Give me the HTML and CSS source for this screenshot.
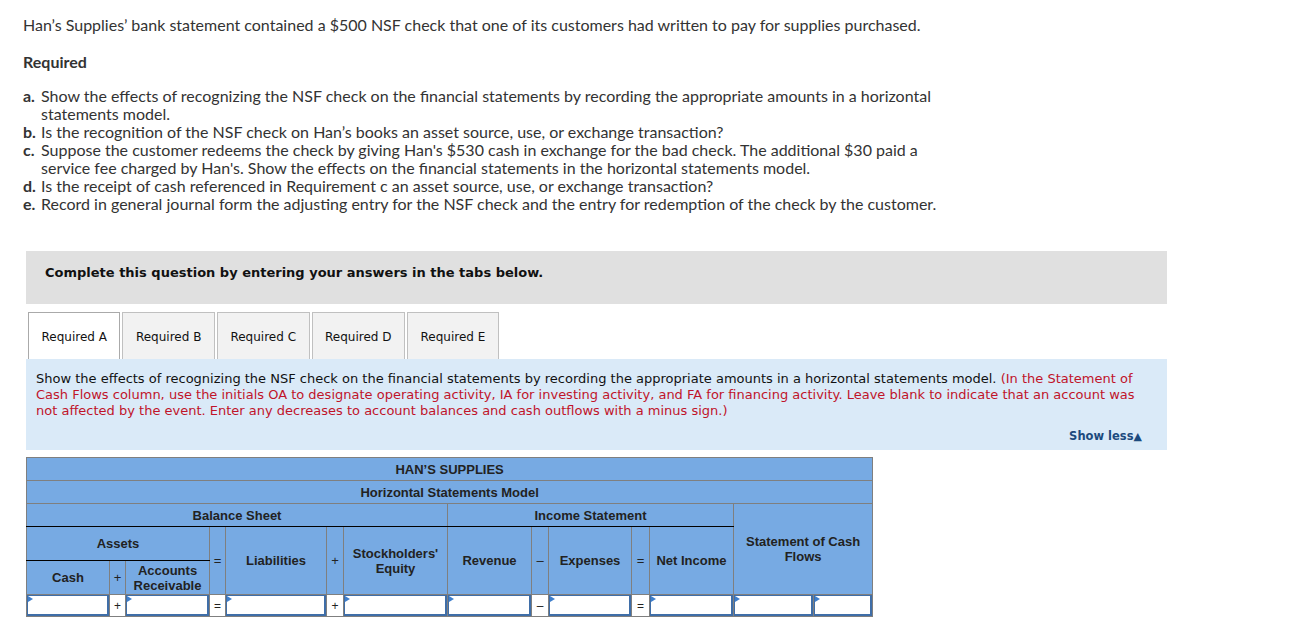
FILE: index.html
```html
<!DOCTYPE html>
<html>
<head>
<meta charset="utf-8">
<link rel="stylesheet" href="styles.css">
</head>
<body>
<div class="page">
  <p class="intro">Han’s Supplies’ bank statement contained a $500 NSF check that one of its customers had written to pay for supplies purchased.</p>
  <p class="req-title">Required</p>
  <ol class="reqs">
    <li><b>a.</b><span>Show the effects of recognizing the NSF check on the financial statements by recording the appropriate amounts in a horizontal statements model.</span></li>
    <li><b>b.</b><span>Is the recognition of the NSF check on Han’s books an asset source, use, or exchange transaction?</span></li>
    <li><b>c.</b><span>Suppose the customer redeems the check by giving Han's $530 cash in exchange for the bad check. The additional $30 paid a service fee charged by Han's. Show the effects on the financial statements in the horizontal statements model.</span></li>
    <li><b>d.</b><span>Is the receipt of cash referenced in Requirement c an asset source, use, or exchange transaction?</span></li>
    <li><b>e.</b><span>Record in general journal form the adjusting entry for the NSF check and the entry for redemption of the check by the customer.</span></li>
  </ol>

  <div class="complete-box">Complete this question by entering your answers in the tabs below.</div>

  <div class="tabs">
    <div class="tab active">Required A</div>
    <div class="tab">Required B</div>
    <div class="tab">Required C</div>
    <div class="tab">Required D</div>
    <div class="tab">Required E</div>
  </div>

  <div class="panel">
    <p class="instr">Show the effects of recognizing the NSF check on the financial statements by recording the appropriate amounts in a horizontal statements model. <span class="red">(In the Statement of Cash Flows column, use the initials OA to designate operating activity, IA for investing activity, and FA for financing activity. Leave blank to indicate that an account was not affected by the event. Enter any decreases to account balances and cash outflows with a minus sign.)</span></p>
    <div class="show-less">Show less<span class="tri">▲</span></div>
  </div>

  <table class="hsm">
    <colgroup>
      <col class="c83"><col class="c16"><col class="c84"><col class="c16"><col class="c101"><col class="c17"><col class="c104"><col class="c84"><col class="c17"><col class="c83"><col class="c18"><col class="c84"><col class="c80"><col class="c59">
    </colgroup>
    <tr class="r23"><th colspan="14">HAN’S SUPPLIES</th></tr>
    <tr class="r23"><th colspan="14">Horizontal Statements Model</th></tr>
    <tr class="r23">
      <th colspan="7" class="bb">Balance Sheet</th>
      <th colspan="5" class="bb">Income Statement</th>
      <th colspan="2" rowspan="3" class="scf">Statement of Cash Flows</th>
    </tr>
    <tr class="r34">
      <th colspan="3" class="bb">Assets</th>
      <th rowspan="2" class="op">=</th>
      <th rowspan="2">Liabilities</th>
      <th rowspan="2" class="op">+</th>
      <th rowspan="2">Stockholders'<br>Equity</th>
      <th rowspan="2">Revenue</th>
      <th rowspan="2" class="op">–</th>
      <th rowspan="2">Expenses</th>
      <th rowspan="2" class="op">=</th>
      <th rowspan="2">Net Income</th>
    </tr>
    <tr class="r34">
      <th>Cash</th>
      <th class="op">+</th>
      <th class="two">Accounts<br>Receivable</th>
    </tr>
    <tr class="inputs">
      <td class="in"><div></div></td>
      <td class="opc">+</td>
      <td class="in"><div></div></td>
      <td class="opc">=</td>
      <td class="in"><div></div></td>
      <td class="opc">+</td>
      <td class="in"><div></div></td>
      <td class="in"><div></div></td>
      <td class="opc">–</td>
      <td class="in"><div></div></td>
      <td class="opc">=</td>
      <td class="in"><div></div></td>
      <td class="in"><div></div></td>
      <td class="in"><div></div></td>
    </tr>
  </table>
</div>
</body>
</html>
```

FILE: styles.css
```css
html, body {
  margin: 0;
  padding: 0;
  background: #fff;
}
.page {
  padding: 16px 0 0 23px;
  font-family: "Lato", "Open Sans", sans-serif;
  color: #333;
}
.intro {
  margin: 0;
  font-size: 16px;
  line-height: 18px;
}
.req-title {
  margin: 19px 0 0;
  font-size: 16px;
  line-height: 18px;
  font-weight: bold;
}
.reqs {
  list-style: none;
  margin: 16px 0 0;
  padding: 0;
  width: 920px;
  font-size: 16px;
  line-height: 18px;
}
.reqs li {
  display: flex;
}
.reqs li b {
  width: 18px;
  flex: none;
}
.complete-box {
  margin: 38px 0 0 3px;
  height: 53px;
  padding: 14px 0 0 19px;
  box-sizing: border-box;
  width: 1141px;
  background: #e0e0e0;
  font-family: "DejaVu Sans", Verdana, sans-serif;
  font-size: 13px;
  font-weight: bold;
  color: #111;
  line-height: 16px;
}
.tabs {
  display: flex;
  gap: 2px;
  margin: 8px 0 0 5px;
  height: 47px;
  align-items: flex-end;
}
.tab {
  height: 47px;
  box-sizing: border-box;
  border: 1px solid #c0c0c0;
  border-bottom: none;
  background: #f2f2f2;
  font-family: "DejaVu Sans", Verdana, sans-serif;
  font-size: 12px;
  color: #111;
  display: flex;
  align-items: center;
  justify-content: center;
  padding: 1px 12.5px 0;
}
.tab.active {
  background: #fff;
  border-color: #aaa;
}
.panel {
  margin-left: 3px;
  width: 1141px;
  height: 91px;
  box-sizing: border-box;
  background: #daeaf8;
  padding: 12px 25px 0 10px;
  font-family: "DejaVu Sans", Verdana, sans-serif;
  font-size: 13px;
  line-height: 16px;
  color: #111;
}
.instr {
  margin: 0;
}
.red {
  color: #c0142a;
}
.show-less {
  text-align: right;
  margin-top: 9px;
  font-weight: bold;
  font-size: 11.5px;
  color: #1c4a7e;
}
.tri {
  font-size: 11px;
}
.hsm {
  margin: 7px 0 0 3px;
  border-collapse: collapse;
  table-layout: fixed;
  width: 847px;
  font-family: "Liberation Sans", Arial, sans-serif;
  font-size: 13px;
  color: #222;
}
.hsm th {
  background: #77aae3;
  border: 1px solid #7f7f7f;
  font-weight: bold;
  padding: 0;
  text-align: center;
  line-height: 15px;
}
.hsm th.bb {
  border-bottom: 1.5px solid #000;
}
.hsm th.op {
  font-weight: normal;
}
.hsm th.scf {
  vertical-align: top;
  padding: 30px 8px 0;
}
.r23 { height: 23px; }
.r34 { height: 34px; }
.c83 { width: 83px; }
.c16 { width: 16px; }
.c84 { width: 84px; }
.c101 { width: 101px; }
.c17 { width: 17px; }
.c104 { width: 104px; }
.c18 { width: 18px; }
.c80 { width: 80px; }
.c59 { width: 59px; }
.inputs { height: 22px; }
.hsm td {
  border: 1px solid #7f7f7f;
  padding: 0;
  background: #fff;
}
.hsm td.opc {
  text-align: center;
  font-size: 12px;
  color: #222;
}
.hsm td.in div {
  position: relative;
  height: 18px;
  border-style: solid;
  border-width: 1px 2px 2px 1px;
  border-color: #3f6ea8;
  margin: 0;
}
.hsm td.in div::before {
  content: "";
  position: absolute;
  left: 0;
  top: 0;
  border-left: 5px solid #3f7fcc;
  border-top: 3px solid transparent;
  border-bottom: 3px solid transparent;
}
```
